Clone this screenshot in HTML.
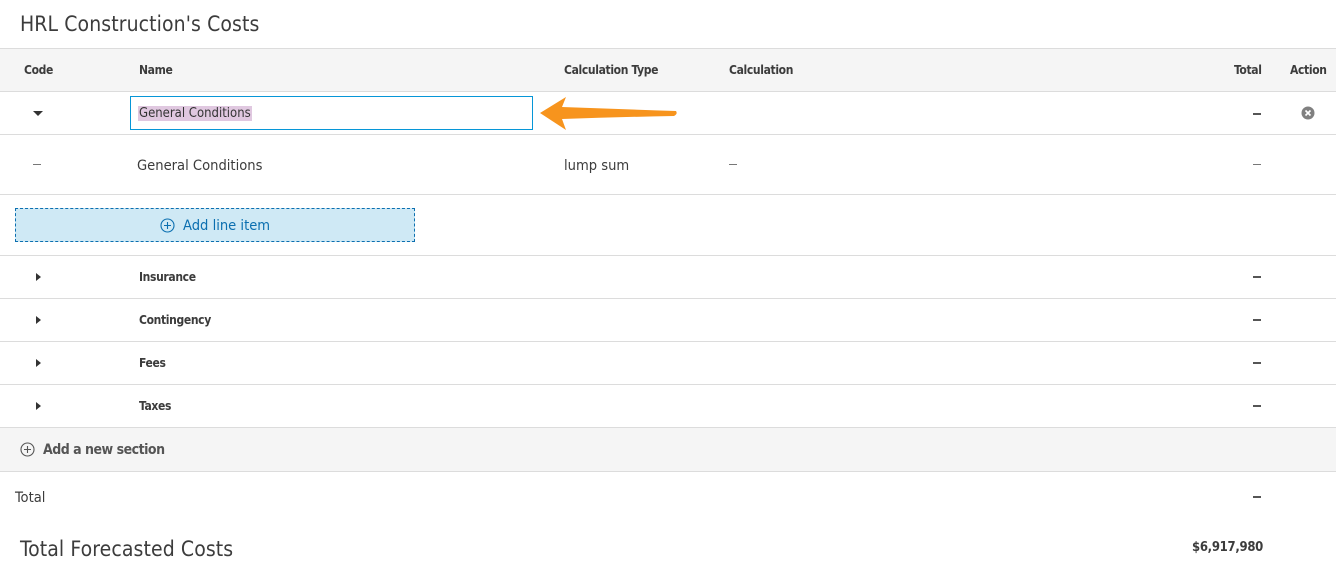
<!DOCTYPE html>
<html><head><style>
*{margin:0;padding:0;box-sizing:border-box}
body{width:1336px;height:571px;background:#fff;font-family:"DejaVu Sans Condensed","Liberation Sans",sans-serif;color:#3c3c3c;position:relative;overflow:hidden}
.a{position:absolute;white-space:nowrap}
.hl{position:absolute;left:0;width:1336px;height:1px;background:#dcdcdc}
.b{font-weight:bold;font-size:12px;color:#3c3c3c;letter-spacing:-0.35px}
.dash{position:absolute;width:8px;height:2px;background:#555}
.tri{position:absolute;width:0;height:0;border-top:4px solid transparent;border-bottom:4px solid transparent;border-left:5px solid #333}
</style></head><body>
<div class="a" style="left:20px;top:12px;font-size:21px;color:#3c3c3c;letter-spacing:0.1px">HRL Construction's Costs</div>
<div style="position:absolute;left:0;top:48px;width:1336px;height:43px;background:#f5f5f5"></div>
<div class="hl" style="top:48px"></div>
<div class="hl" style="top:91px"></div>
<div class="a b" style="left:24px;top:63px">Code</div>
<div class="a b" style="left:139px;top:63px">Name</div>
<div class="a b" style="left:564px;top:63px">Calculation Type</div>
<div class="a b" style="left:729px;top:63px">Calculation</div>
<div class="a b" style="left:1234px;top:63px">Total</div>
<div class="a b" style="left:1290px;top:63px">Action</div>

<div style="position:absolute;left:33px;top:111px;border-left:5px solid transparent;border-right:5px solid transparent;border-top:5px solid #333"></div>
<div style="position:absolute;left:130px;top:96px;width:403px;height:34px;border:1px solid #0696d7;background:#fff"></div>
<div class="a" style="left:138px;top:106px;font-size:13px;background:#e0c8e0;color:#333;padding:0 1px">General Conditions</div>
<svg class="a" style="left:538px;top:95px" width="142" height="38"><path d="M2 18 L28 2 L24 12 Q80 14 138 16 Q140 19 136 21 Q80 22 24 24 L28 35 Z" fill="#f7941d"/></svg>
<div class="dash" style="left:1253px;top:113px"></div>
<svg class="a" style="left:1301px;top:106px" width="14" height="14"><circle cx="7" cy="7" r="6.5" fill="#808080"/><path d="M4.5 4.5L9.5 9.5M9.5 4.5L4.5 9.5" stroke="#fff" stroke-width="1.6"/></svg>
<div class="hl" style="top:134px"></div>

<div class="dash" style="left:33px;top:164px;height:1px;background:#777"></div>
<div class="a" style="left:137px;top:157px;font-size:14.6px">General Conditions</div>
<div class="a" style="left:564px;top:157px;font-size:14.6px">lump sum</div>
<div class="dash" style="left:729px;top:164px;height:1px;background:#777"></div>
<div class="dash" style="left:1253px;top:164px;height:1px;background:#777"></div>
<div class="hl" style="top:194px"></div>

<div style="position:absolute;left:15px;top:208px;width:400px;height:34px;background:#cfe9f5;border:1px dashed #0b6fb0"></div>
<svg class="a" style="left:160px;top:218px" width="15" height="15"><circle cx="7.5" cy="7.5" r="6.5" fill="none" stroke="#0b6fb0" stroke-width="1.1"/><path d="M7.5 4v7M4 7.5h7" stroke="#0b6fb0" stroke-width="1.1"/></svg>
<div class="a" style="left:183px;top:217px;font-size:14.6px;color:#0b6fb0">Add line item</div>
<div class="hl" style="top:255px"></div>

<div class="tri" style="left:36px;top:273px"></div><div class="a b" style="left:139px;top:270px">Insurance</div><div class="dash" style="left:1253px;top:276px"></div>
<div class="hl" style="top:298px"></div>
<div class="tri" style="left:36px;top:316px"></div><div class="a b" style="left:139px;top:313px">Contingency</div><div class="dash" style="left:1253px;top:319px"></div>
<div class="hl" style="top:341px"></div>
<div class="tri" style="left:36px;top:359px"></div><div class="a b" style="left:139px;top:356px">Fees</div><div class="dash" style="left:1253px;top:362px"></div>
<div class="hl" style="top:384px"></div>
<div class="tri" style="left:36px;top:402px"></div><div class="a b" style="left:139px;top:399px">Taxes</div><div class="dash" style="left:1253px;top:405px"></div>
<div class="hl" style="top:427px"></div>

<div style="position:absolute;left:0;top:428px;width:1336px;height:43px;background:#f5f5f5"></div>
<svg class="a" style="left:20px;top:442px" width="15" height="15"><circle cx="7.5" cy="7.5" r="6.5" fill="none" stroke="#555" stroke-width="1.1"/><path d="M7.5 4v7M4 7.5h7" stroke="#555" stroke-width="1.1"/></svg>
<div class="a" style="left:43px;top:442px;font-size:14px;font-weight:bold;color:#555;letter-spacing:-0.5px">Add a new section</div>
<div class="hl" style="top:471px"></div>

<div class="a" style="left:15px;top:489px;font-size:14.6px">Total</div>
<div class="dash" style="left:1253px;top:496px"></div>
<div class="a" style="left:20px;top:537px;font-size:21px;letter-spacing:0.1px">Total Forecasted Costs</div>
<div class="a" style="left:1192px;top:540px;font-size:13px;font-weight:bold;letter-spacing:-0.3px">$6,917,980</div>
</body></html>
